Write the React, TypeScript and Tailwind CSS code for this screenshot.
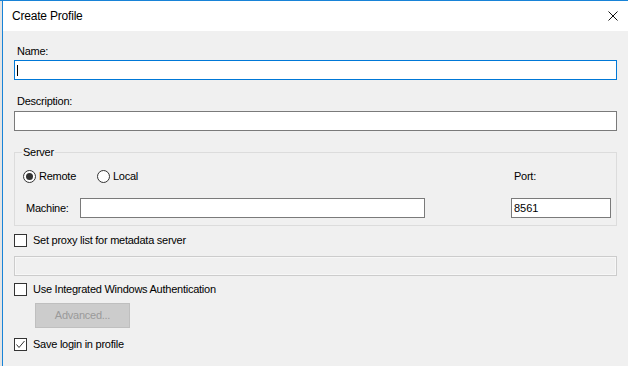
import React from 'react'

const font = { fontFamily: '"Liberation Sans", Arial, sans-serif' }

const CheckBox: React.FC<{ checked?: boolean; label: string; className?: string }> = ({ checked, label, className }) => (
  <div className={`flex items-center h-[13px] ${className ?? ''}`}>
    <div className="w-[13px] h-[13px] border border-[#333333] bg-white flex-shrink-0 flex items-center justify-center">
      {checked && (
        <svg width="11" height="11" viewBox="0 0 11 11">
          <polyline points="1.5,5.5 4,8.5 9.5,2" fill="none" stroke="#333333" strokeWidth="1" />
        </svg>
      )}
    </div>
    <span className="ml-[6px] text-[11px] leading-[13px] tracking-[-0.25px] text-black">{label}</span>
  </div>
)

const Radio: React.FC<{ checked?: boolean; label: string; className?: string }> = ({ checked, label, className }) => (
  <div className={`flex items-center h-[14px] ${className ?? ''}`}>
    <div className="w-[13px] h-[13px] rounded-full border border-[#333333] bg-white flex items-center justify-center flex-shrink-0">
      {checked && <div className="w-[7px] h-[7px] rounded-full bg-[#333333]" />}
    </div>
    <span className="ml-[3px] text-[11px] leading-[13px] tracking-[-0.25px] text-black">{label}</span>
  </div>
)

export default function App() {
  return (
    <div className="w-[628px] h-[366px] overflow-hidden bg-[#f0f0f0] border-t border-[#1883d7] flex" style={font}>
      {/* sliver of whatever is behind the dialog */}
      <div className="w-[2px] bg-[#e4e4e4] flex-shrink-0" />

      <div className="flex-1 flex flex-col border-l border-[#1883d7]">
        {/* Title bar */}
        <div className="h-[30px] bg-white flex items-center justify-between pl-[9px] pr-[10px] flex-shrink-0">
          <span className="text-[12px] tracking-[-0.2px] text-black leading-none">Create Profile</span>
          <svg width="10" height="10" viewBox="0 0 10 10" className="mt-[-1px]">
            <path d="M0.5 0.5 L9.5 9.5 M9.5 0.5 L0.5 9.5" stroke="#111111" strokeWidth="1" />
          </svg>
        </div>

        {/* Body */}
        <div className="flex-1 pl-[11px] pr-[11px] flex flex-col text-[11px] leading-[13px] tracking-[-0.25px] text-black">
          <div className="mt-[14px] pl-[3px] h-[13px]">Name:</div>
          <div className="mt-[2px] h-[20px] border border-[#0078d7] bg-white flex items-center pl-[2px]">
            <div className="w-[1px] h-[11px] bg-black" />
          </div>

          <div className="mt-[15px] pl-[3px] h-[13px]">Description:</div>
          <div className="mt-[3px] h-[20px] border border-[#7a7a7a] bg-white" />

          {/* Server group */}
          <div className="relative mt-[21px] h-[74px] border border-[#dcdcdc] pl-[8px] pr-[5px] pt-[16px]">
            <span className="absolute -top-[7px] left-[7px] px-[1px] bg-[#f0f0f0] leading-[13px]">Server</span>

            <div className="flex items-center h-[14px]">
              <div className="flex-1 flex">
                <Radio checked label="Remote" className="w-[74px]" />
                <Radio label="Local" />
              </div>
              <div className="w-[100px] pl-[3px]">Port:</div>
            </div>

            <div className="mt-[15px] flex items-center h-[20px]">
              <div className="w-[57px] pl-[3px]">Machine:</div>
              <div className="w-[345px] h-[20px] border border-[#7a7a7a] bg-white" />
              <div className="flex-1" />
              <div className="w-[100px] h-[20px] border border-[#7a7a7a] bg-white flex items-center pl-[2px] tracking-normal">8561</div>
            </div>
          </div>

          <CheckBox label="Set proxy list for metadata server" className="mt-[8px]" />
          <div className="mt-[9px] h-[20px] border border-[#cccccc] bg-[#f0f0f0] shadow-[inset_0_0_0_1px_#f7f7f7]" />

          <CheckBox label="Use Integrated Windows Authentication" className="mt-[7px]" />
          <div className="mt-[7px] ml-[21px] w-[95px] h-[25px] border border-[#bfbfbf] bg-[#cccccc] flex items-center justify-center text-[#9a9a9a]">
            Advanced...
          </div>

          <CheckBox checked label="Save login in profile" className="mt-[10px]" />
        </div>
      </div>
    </div>
  )
}
